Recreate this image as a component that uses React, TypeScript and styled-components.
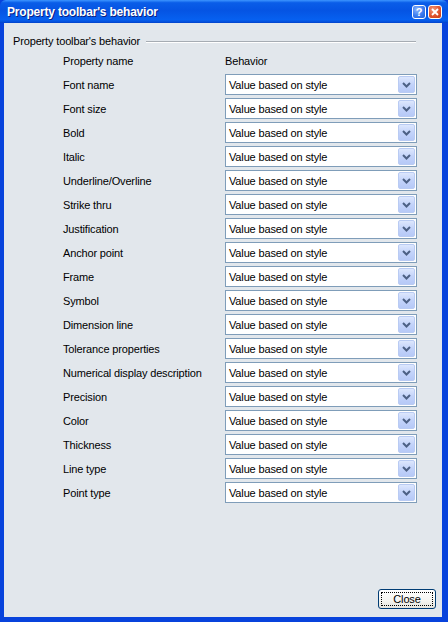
import React from "react";
import styled, { createGlobalStyle } from "styled-components";

const Global = createGlobalStyle`
  html, body { margin: 0; padding: 0; background: #fff; }
  body { font-family: "Liberation Sans", Arial, sans-serif; }
  * { box-sizing: border-box; }
`;

const Window = styled.div`
  width: 448px;
  height: 622px;
  display: flex;
  flex-direction: column;
  background: #0843dc;
`;

const TitleBar = styled.div`
  height: 23px;
  flex: none;
  display: flex;
  align-items: center;
  padding: 0 7px 0 7px;
  background: linear-gradient(
    to bottom,
    #3d95ff 0%,
    #0a5de8 12%,
    #0554e3 45%,
    #0660f0 85%,
    #0350dc 95%,
    #0040c8 100%
  );
  border-radius: 6px 6px 0 0;
`;

const Title = styled.div`
  flex: 1;
  color: #fff;
  font-family: "Liberation Sans", Arial, sans-serif;
  font-weight: bold;
  font-size: 12px;
  letter-spacing: -0.2px;
  text-shadow: 1px 1px 0 #0a1f82;
`;

const TitleButtons = styled.div`
  display: flex;
  gap: 2px;
  margin-right: -1px;
`;

const CaptionButton = styled.div<{ $variant: "help" | "close" }>`
  width: 14px;
  height: 14px;
  border: 1px solid #fff;
  border-radius: 3px;
  display: flex;
  align-items: center;
  justify-content: center;
  color: #fff;
  font-weight: bold;
  font-size: 11px;
  font-family: "Liberation Sans", Arial, sans-serif;
  background: ${(p) =>
    p.$variant === "close"
      ? "radial-gradient(circle at 35% 30%, #f19a7c 0%, #e0542e 55%, #c23a14 100%)"
      : "radial-gradient(circle at 35% 30%, #8cb6ff 0%, #3a7cf0 55%, #1f5ed8 100%)"};
`;

const Frame = styled.div`
  flex: 1;
  display: flex;
  flex-direction: column;
  margin: 0 6px 5px 4px;
  background: #e2e7ec;
  padding: 11px 6px 8px 9px;
  font-size: 11px;
  letter-spacing: -0.15px;
`;

const GroupHeader = styled.div`
  display: flex;
  align-items: center;
  gap: 6px;
  height: 14px;
  margin-right: 20px;
`;

const GroupLabel = styled.span`
  color: #000;
  white-space: nowrap;
`;

const GroupLine = styled.div`
  flex: 1;
  height: 2px;
  border-top: 1px solid #a6acb3;
  border-bottom: 1px solid #ffffff;
  margin-top: 1px;
`;

const Table = styled.div`
  display: grid;
  grid-template-columns: 162px 192px;
  grid-template-rows: 17px;
  grid-auto-rows: 21px;
  row-gap: 3px;
  padding-left: 50px;
  margin-top: 6px;
  align-items: center;
`;

const HeaderCell = styled.div`
  color: #000;
  align-self: start;
  line-height: 14px;
`;

const Label = styled.div`
  color: #000;
`;

const Combo = styled.div`
  height: 21px;
  border: 1px solid #7f9db9;
  background: #fff;
  display: flex;
  align-items: center;
  padding: 1px;
`;

const ComboText = styled.span`
  flex: 1;
  padding-left: 2px;
  color: #000;
`;

const ComboButton = styled.div`
  width: 17px;
  height: 17px;
  border-radius: 2px;
  border: 1px solid #b9cbf3;
  background: linear-gradient(to bottom, #dde7fd 0%, #c3d3fa 50%, #b6c9f7 100%);
  display: flex;
  align-items: center;
  justify-content: center;
`;

const Footer = styled.div`
  margin-top: auto;
  display: flex;
  justify-content: flex-end;
`;

const Button = styled.div`
  width: 58px;
  height: 20px;
  border: 1px solid #003c74;
  border-radius: 3px;
  background: linear-gradient(to bottom, #ffffff 0%, #f4f4f0 60%, #e4e3dc 100%);
  padding: 2px;
  display: flex;
`;

const FocusRect = styled.div`
  flex: 1;
  border: 1px dotted #000;
  display: flex;
  align-items: center;
  justify-content: center;
  color: #000;
`;

const rows = [
  "Font name",
  "Font size",
  "Bold",
  "Italic",
  "Underline/Overline",
  "Strike thru",
  "Justification",
  "Anchor point",
  "Frame",
  "Symbol",
  "Dimension line",
  "Tolerance properties",
  "Numerical display description",
  "Precision",
  "Color",
  "Thickness",
  "Line type",
  "Point type",
];

const Chevron = () => (
  <svg width="9" height="6" viewBox="0 0 9 6">
    <path d="M1 1 L4.5 4.5 L8 1" fill="none" stroke="#4d6185" strokeWidth="2" />
  </svg>
);

const CloseGlyph = () => (
  <svg width="8" height="8" viewBox="0 0 8 8">
    <path d="M1 1 L7 7 M7 1 L1 7" stroke="#fff" strokeWidth="1.8" />
  </svg>
);

export default function App() {
  return (
    <>
      <Global />
      <Window>
        <TitleBar>
          <Title>Property toolbar's behavior</Title>
          <TitleButtons>
            <CaptionButton $variant="help">?</CaptionButton>
            <CaptionButton $variant="close">
              <CloseGlyph />
            </CaptionButton>
          </TitleButtons>
        </TitleBar>
        <Frame>
          <GroupHeader>
            <GroupLabel>Property toolbar's behavior</GroupLabel>
            <GroupLine />
          </GroupHeader>
          <Table>
            <HeaderCell>Property name</HeaderCell>
            <HeaderCell>Behavior</HeaderCell>
            {rows.map((r) => (
              <React.Fragment key={r}>
                <Label>{r}</Label>
                <Combo>
                  <ComboText>Value based on style</ComboText>
                  <ComboButton>
                    <Chevron />
                  </ComboButton>
                </Combo>
              </React.Fragment>
            ))}
          </Table>
          <Footer>
            <Button>
              <FocusRect>Close</FocusRect>
            </Button>
          </Footer>
        </Frame>
      </Window>
    </>
  );
}
